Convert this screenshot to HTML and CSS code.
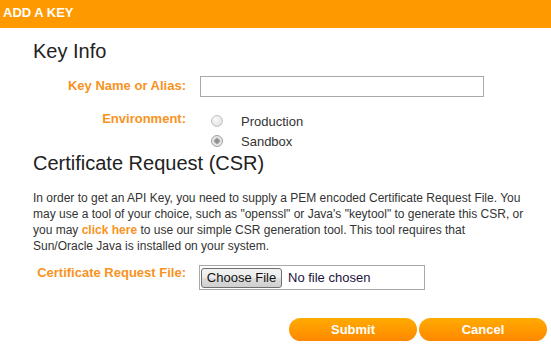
FILE: index.html
```html
<!DOCTYPE html>
<html>
<head>
<meta charset="utf-8">
<link rel="stylesheet" href="styles.css">
</head>
<body>
<div class="header">ADD A KEY</div>
<div class="content">
  <h2 class="title first">Key Info</h2>
  <div class="row">
    <label class="lbl lbl-input">Key Name or Alias:</label>
    <input class="text" type="text">
  </div>
  <div class="row env">
    <span class="lbl">Environment:</span>
    <div class="options">
      <label class="opt"><span class="radio"></span>Production</label>
      <label class="opt"><span class="radio checked"></span>Sandbox</label>
    </div>
  </div>
  <h2 class="title second">Certificate Request (CSR)</h2>
  <p class="desc">In order to get an API Key, you need to supply a PEM encoded Certificate Request File. You may use a tool of your choice, such as "openssl" or Java's "keytool" to generate this CSR, or you may <a class="link">click here</a> to use our simple CSR generation tool. This tool requires that Sun/Oracle Java is installed on your system.</p>
  <div class="row filerow">
    <span class="lbl lbl-file">Certificate Request File:</span>
    <div class="filebox"><span class="choose">Choose File</span><span class="nofile">No file chosen</span></div>
  </div>
  <div class="actions">
    <button class="btn">Submit</button>
    <button class="btn">Cancel</button>
  </div>
</div>
</body>
</html>
```

FILE: styles.css
```css
body {
  margin: 0;
  font-family: "Liberation Sans", Arial, sans-serif;
  background: #fff;
  width: 551px;
  overflow: hidden;
}
.header {
  height: 28px;
  line-height: 25px;
  padding: 0 3px;
  background: #ff9900;
  color: #fff;
  font-weight: bold;
  font-size: 13px;
}
.content {
  padding-left: 33px;
}
.title {
  font-size: 20px;
  font-weight: normal;
  line-height: 24px;
  color: #222;
  margin: 0;
}
.title.first {
  margin-top: 11px;
  margin-bottom: 13px;
}
.title.second {
  margin-top: 0;
}
.row {
  display: flex;
  align-items: flex-start;
}
.lbl {
  width: 153px;
  margin-right: 14px;
  text-align: right;
  font-size: 13px;
  line-height: 16px;
  font-weight: bold;
  color: #f7931e;
  flex: none;
}
.lbl-input {
  padding-top: 2px;
}
.text {
  box-sizing: border-box;
  width: 284px;
  height: 21px;
  margin: 0;
  border: 1px solid #a9a9a9;
  padding: 0 3px;
  font: 13px "Liberation Sans", Arial, sans-serif;
}
.env {
  margin-top: 14px;
}
.options {
  display: flex;
  flex-direction: column;
}
.opt {
  display: flex;
  align-items: center;
  height: 20px;
  font-size: 13px;
  color: #333;
}
.radio {
  box-sizing: border-box;
  width: 12px;
  height: 12px;
  border-radius: 50%;
  margin-left: 11px;
  margin-right: 18px;
  border: 1px solid #c4c4c4;
  background: radial-gradient(circle at 40% 35%, #fbfbfb 0%, #e6e6e6 60%, #d8d8d8 100%);
}
.radio.checked {
  border-color: #a0a0a0;
  background: radial-gradient(circle, #8a8a8a 0, #9a9a9a 2.5px, #e2e2e2 3px, #ececec 100%);
}
.desc {
  width: 494px;
  margin: 15px 0 0 0;
  font-size: 12px;
  line-height: 16px;
  color: #333;
}
.link {
  color: #f7931e;
  font-weight: bold;
  text-decoration: none;
}
.filerow {
  margin-top: 11px;
}
.lbl-file {
  padding-top: 0;
}
.filebox {
  box-sizing: border-box;
  width: 226px;
  height: 25px;
  margin-left: -1px;
  border: 1px solid #a9a9a9;
  padding: 1px 1px;
  display: flex;
  align-items: center;
}
.choose {
  box-sizing: border-box;
  height: 20px;
  width: 81px;
  border: 1px solid #707070;
  border-radius: 3px;
  background: linear-gradient(#f2f2f2, #ebebeb 50%, #dddddd 50%, #cfcfcf);
  font-size: 13px;
  line-height: 18px;
  text-align: center;
  color: #111;
}
.nofile {
  margin-left: 6px;
  font-size: 13px;
  color: #1b1340;
}
.actions {
  display: flex;
  justify-content: flex-end;
  gap: 2px;
  padding-right: 4px;
  margin-top: 28px;
}
.btn {
  width: 128px;
  height: 23px;
  border: none;
  border-radius: 12px;
  background: linear-gradient(#ffab00, #ff8800);
  color: #fff;
  font: bold 13px "Liberation Sans", Arial, sans-serif;
  padding: 0;
}
```
